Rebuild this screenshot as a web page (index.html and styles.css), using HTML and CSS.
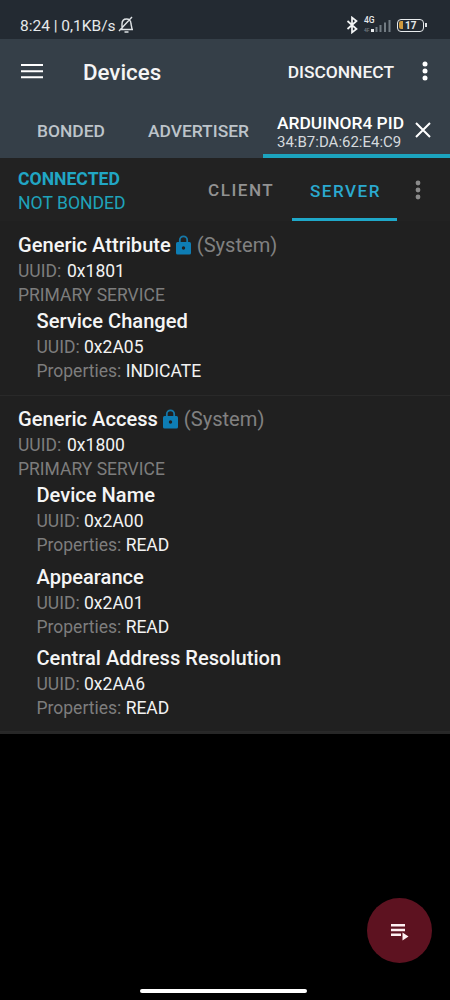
FILE: index.html
```html
<!DOCTYPE html>
<html lang="en">
<head>
<meta charset="utf-8">
<title>Devices</title>
<link rel="stylesheet" href="styles.css">
</head>
<body>
<div class="status">
  <span class="clock">8:24 | 0,1KB/s</span>
  <svg class="bell" width="16" height="18" viewBox="0 0 16 18" fill="none" stroke="#dfe3e6" stroke-width="1.4"><path d="M2.500 13.500h12.500M4 13V8c0-3.500 2-5 4.500-5S13 4.500 13 8l1 5M6.500 16h4M1 15 14 1"/></svg>
  <div class="indicators">
    <svg width="12" height="18" viewBox="0 0 12 18" fill="none" stroke="#f2f4f5" stroke-width="1.7"><path d="m1.500 5 9 8L6 16.500v-15L10.500 5l-9 8"/></svg>
    <div class="signal">
      <span class="net">4G</span><span class="net2">4F</span>
      <svg width="28" height="18" viewBox="0 0 28 18"><path fill="#e8ebed" d="M8 13h3v3H8z"/><path fill="#737c83" d="M12.500 11h2v5h-2zM16.500 9h2v7h-2zM21 6.500h2V16h-2zM25.500 4h2v12h-2z"/></svg>
    </div>
    <div class="battery"><i></i><span>17</span></div>
  </div>
</div>
<div class="toolbar">
  <svg width="22" height="16" viewBox="0 0 22 16" fill="#fff"><path d="M0 0h22v2H0zM0 6.200h22v2H0zM0 12.300h22v2H0z"/></svg>
  <h1>Devices</h1>
  <span class="disconnect">DISCONNECT</span>
  <svg class="more" width="6" height="20" viewBox="0 0 6 20" fill="#fff"><circle cx="3" cy="3" r="2.500"/><circle cx="3" cy="10" r="2.500"/><circle cx="3" cy="17" r="2.500"/></svg>
</div>
<div class="tabs">
  <span class="tab bonded">BONDED</span>
  <span class="tab adv">ADVERTISER</span>
  <div class="tab active">
    <div class="device"><b>ARDUINOR4 PID</b><span>34:B7:DA:62:E4:C9</span></div>
    <svg width="16" height="16" viewBox="0 0 16 16" stroke="#fff" stroke-width="2"><path d="m1 1 14 14M15 1 1 15"/></svg>
  </div>
</div>
<div class="connection">
  <div class="state"><b>CONNECTED</b><span>NOT BONDED</span></div>
  <span class="mode client">CLIENT</span>
  <span class="mode server">SERVER</span>
  <svg class="more" width="6" height="20" viewBox="0 0 6 20" fill="#8b8b8b"><circle cx="3" cy="3" r="2.400"/><circle cx="3" cy="10" r="2.400"/><circle cx="3" cy="17" r="2.400"/></svg>
</div>
<main>
  <section class="service">
    <h2><span>Generic Attribute</span><svg class="lock" width="15" height="20" viewBox="0 0 15 20"><path d="M3.800 8V5a3.700 3.700 0 0 1 7.400 0v3" fill="none" stroke="#1678a8" stroke-width="1.800"/><rect y="7" width="15" height="12.500" rx="1.500" fill="#0e7db4"/><circle cx="7.500" cy="13" r="1.700" fill="#202020"/></svg><em>(System)</em></h2>
    <p class="uuid">UUID: <b>0x1801</b></p>
    <p>PRIMARY SERVICE</p>
    <div class="char"><h3>Service Changed</h3><p>UUID: <b>0x2A05</b></p><p>Properties: <b>INDICATE</b></p></div>
  </section>
  <section class="service">
    <h2><span>Generic Access</span><svg class="lock" width="15" height="20" viewBox="0 0 15 20"><path d="M3.800 8V5a3.700 3.700 0 0 1 7.400 0v3" fill="none" stroke="#1678a8" stroke-width="1.800"/><rect y="7" width="15" height="12.500" rx="1.500" fill="#0e7db4"/><circle cx="7.500" cy="13" r="1.700" fill="#202020"/></svg><em>(System)</em></h2>
    <p class="uuid">UUID: <b>0x1800</b></p>
    <p>PRIMARY SERVICE</p>
    <div class="char"><h3>Device Name</h3><p>UUID: <b>0x2A00</b></p><p>Properties: <b>READ</b></p></div>
    <div class="char"><h3>Appearance</h3><p>UUID: <b>0x2A01</b></p><p>Properties: <b>READ</b></p></div>
    <div class="char"><h3>Central Address Resolution</h3><p>UUID: <b>0x2AA6</b></p><p>Properties: <b>READ</b></p></div>
  </section>
</main>
<div class="fab"><svg width="18" height="17" viewBox="0 0 18 17" fill="#fff0f2"><path d="M0 0h14v2.500H0zM0 4.800h14v2.500H0zM0 9.600h10v2.500H0zM11.500 8.500l6 4-6 4z"/></svg></div>
<div class="home"></div>
</body>
</html>
```
FILE: styles.css
```css
* { box-sizing: border-box; margin: 0; padding: 0; }
body { width: 450px; height: 1000px; overflow: hidden; background: #000; color: #f5f5f5; font-family: Roboto, sans-serif; display: flex; flex-direction: column; }
svg { display: block; flex: none; }
b, em { font-style: normal; font-weight: inherit; }
span, b, h1, h2, h3, p { white-space: nowrap; }
.status { height: 39px; flex: none; background: #232a32; display: flex; align-items: center; padding: 11px 26px 0 20px; color: #e6e9eb; }
.clock { font-size: 15.500px; line-height: 18px; padding-top: 1px; }
.bell { margin-left: 2px; }
.indicators { margin-left: auto; display: flex; align-items: center; }
.signal { position: relative; margin-left: 5px; }
.net, .net2 { position: absolute; left: 1px; top: 0; font-size: 8.500px; line-height: 9px; font-weight: 500; }
.net2 { left: 1px; top: 11px; font-size: 5px; line-height: 6px; color: #737c83; }
.battery { position: relative; width: 27px; height: 13px; margin-left: 6px; border: 1.500px solid #e8ebed; border-radius: 4px; display: flex; align-items: center; padding: 1px; font-size: 10px; font-weight: 700; }
.battery i { width: 4px; height: 8px; background: #cf9a3e; border-radius: 2px 0 0 2px; }
.battery span { margin-left: 2px; }
.battery::after { content: ""; position: absolute; right: -4px; top: 3px; width: 2px; height: 4px; background: #dde0e2; }
.toolbar { height: 66px; flex: none; background: #353f48; display: flex; align-items: center; padding: 0 22px 0 21px; }
.toolbar h1 { font-size: 22.300px; font-weight: 500; margin-left: 40px; }
.disconnect { margin-left: auto; font-size: 17.400px; font-weight: 500; }
.toolbar .more { margin-left: 28px; margin-top: -2px; }
.tabs { height: 53px; flex: none; background: #353f48; display: flex; }
.tab { font-size: 17.400px; font-weight: 500; color: #bdc4ca; line-height: 53px; }
.bonded { margin-left: 37px; width: 111px; }
.adv { width: 115px; }
.tab.active { flex: 1; border-bottom: 4px solid #1ca4bf; display: flex; align-items: center; padding-left: 14px; color: #fff; }
.device { width: 138px; display: flex; flex-direction: column; padding-top: 4px; }
.device b { font-size: 17.400px; line-height: 20px; }
.device span { font-size: 15px; line-height: 18px; font-weight: 400; color: #d6dade; }
.tab.active svg { margin-top: 1px; }
.connection { height: 63px; flex: none; background: #222; display: flex; align-items: center; padding-left: 18px; }
.state { width: 189px; display: flex; flex-direction: column; padding-top: 2px; font-size: 17.600px; line-height: 24px; color: #1fa3bb; }
.state b { font-weight: 700; color: #21a6c4; }
.mode { font-size: 17.100px; font-weight: 500; letter-spacing: 1.500px; color: #929292; line-height: 66px; }
.client { width: 85px; padding-left: 1px; padding-top: 1px; }
.server { width: 105px; height: 63px; padding-left: 2px; text-align: center; border-bottom: 3px solid #1fa8c9; color: #2ba9cf; }
.connection .more { margin-left: 18px; }
main { background: #202020; height: 513px; flex: none; border-bottom: 2px solid #272727; }
.service { padding: 11px 18px 0; height: 175px; border-bottom: 1px solid #292929; }
.service + .service { height: 336px; padding-top: 10px; }
h2, h3 { font-size: 20.100px; line-height: 27px; font-weight: 500; }
h2 { display: flex; }
.lock { margin: 3px 6px 0 5px; }
h2 em { font-weight: 400; color: #818181; }
.service p { font-size: 17.500px; line-height: 24px; color: #7d7d7d; }
.service p b { color: #f2f2f2; }
.service .uuid b { margin-left: 1.500px; }
.char { margin-left: 18.500px; height: 81.700px; padding-top: 1px; }
.fab { position: absolute; left: 367px; top: 898px; width: 65px; height: 65px; border-radius: 50%; background: #5d1220; display: flex; align-items: center; justify-content: center; padding: 3px 0 0 0; }
.home { position: absolute; left: 140px; top: 989px; width: 167px; height: 4px; border-radius: 2px; background: #fff; }
```
